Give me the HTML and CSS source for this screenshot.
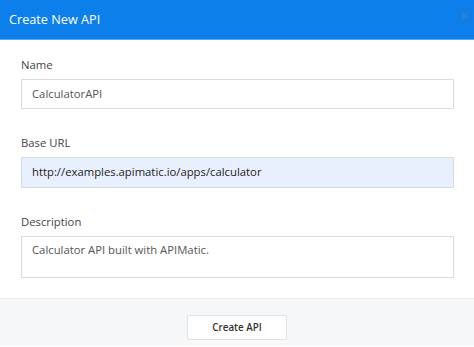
FILE: index.html
```html
<!DOCTYPE html>
<html lang="en">
<head>
    <meta charset="UTF-8">
    <title>Create New API</title>
    <link rel="stylesheet" href="styles.css">
</head>
<body>

<div class="modal">
    <div class="modal-header">
        <h1>Create New API</h1>
        <span class="close">&times;</span>
    </div>

    <div class="modal-body">
        <div class="field">
            <label>Name</label>
            <div class="input">CalculatorAPI</div>
        </div>
        <div class="field">
            <label>Base URL</label>
            <div class="input filled">http://examples.apimatic.io/apps/calculator</div>
        </div>
        <div class="field">
            <label>Description</label>
            <div class="input area">Calculator API built with APIMatic.</div>
        </div>
    </div>

    <div class="modal-footer">
        <button class="button">Create API</button>
    </div>
</div>

</body>
</html>
```

FILE: styles.css
```css
* {
    box-sizing: border-box;
}

body {
    margin: 0;
    background: #fff;
    font-family: "Open Sans", "Noto Sans", sans-serif;
}

.modal {
    width: 474px;
    height: 347px;
    display: flex;
    flex-direction: column;
}

.modal-header {
    height: 40px;
    background-color: #0c7fea;
    border-bottom: 1px solid #5aa6f0;
    display: flex;
    align-items: center;
    justify-content: space-between;
    padding: 0 6px 2px 9px;
}

.modal-header h1 {
    margin: 0;
    font-size: 12.7px;
    font-weight: 400;
    color: #fff;
}

.modal-header .close {
    color: #4d7fb5;
    font-size: 14px;
    line-height: 1;
    margin-bottom: 6px;
}

.modal-body {
    padding: 16px 20px 20px 21px;
}

.field {
    margin-bottom: 25px;
}

.field:last-child {
    margin-bottom: 0;
}

.field label {
    display: block;
    font-size: 11.3px;
    line-height: 18px;
    color: #444;
    margin-bottom: 5px;
}

.input {
    width: 433px;
    height: 30px;
    border: 1px solid #dcdcdc;
    padding: 0 10px;
    font-size: 11.3px;
    line-height: 28px;
    color: #555;
}

.input.filled {
    height: 31px;
    background-color: #e8f0fe;
    border-color: #d6dce6;
    color: #222;
}

.input.area {
    height: 42px;
    line-height: 26px;
}

.modal-footer {
    height: 48px;
    background-color: #f6f7f9;
    border-top: 1px solid #ececec;
    padding-top: 15px;
    text-align: center;
}

.button {
    width: 100px;
    height: 25px;
    background: #fff;
    border: 1px solid #e2e2e2;
    border-radius: 2px;
    font-family: "Open Sans", "Noto Sans", sans-serif;
    font-size: 9.8px;
    font-weight: 600;
    color: #333;
}
```
